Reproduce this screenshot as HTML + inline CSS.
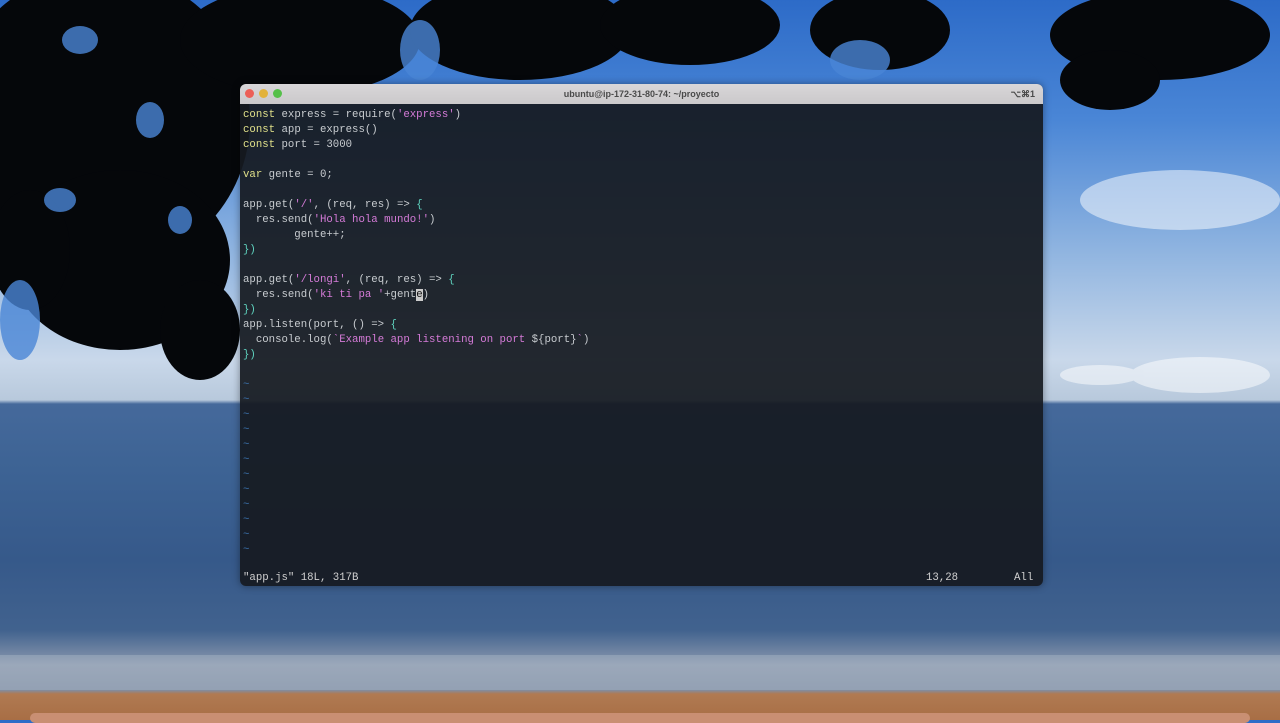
<!DOCTYPE html>
<html><head><meta charset="utf-8"><style>
body{margin:0;width:1280px;height:720px;overflow:hidden;position:relative;font-family:"Liberation Sans",sans-serif;
background:linear-gradient(180deg,#2d6bc8 0px,#4a86d6 120px,#8fb4e0 250px,#c9d8ea 360px,#b8c9dc 400px,#45699b 404px,#3d6394 470px,#36598a 560px,#41628e 630px,#8a98ae 665px,#7f8ea4 690px,#b07a52 694px,#a86e45 720px);}
svg.bg{position:absolute;left:0;top:0}
.term{position:absolute;left:240px;top:84px;width:803px;height:502px;border-radius:6px;overflow:hidden;background:rgba(22,26,32,0.93);box-shadow:0 0 8px rgba(0,0,0,.4)}
.tb{height:20px;background:linear-gradient(#d8d6d8,#cbc9cb);position:relative;font-size:9px;color:#4a4a4a;text-align:center;line-height:20px;font-weight:bold}
.dot{position:absolute;top:5px;width:9px;height:9px;border-radius:50%}
.code{position:absolute;left:3px;top:24px;font-family:"Liberation Mono",monospace;font-size:10.7px;line-height:15px;color:#c8ccd0;white-space:pre}
.k{color:#e0e08a}.s{color:#d57bd8}.g{color:#5fd3bf}.t{color:#3a6fa8}
.st{position:absolute;bottom:2px;font-family:"Liberation Mono",monospace;font-size:10.7px;color:#d0d0d0;white-space:pre}
.dock{position:absolute;left:30px;top:713px;width:1220px;height:10px;background:#c98f73;border-radius:5px}
</style></head><body>
<svg class="bg" width="1280" height="720">
<g fill="#05070a">
<ellipse cx="100" cy="120" rx="150" ry="150"/>
<ellipse cx="120" cy="260" rx="110" ry="90"/>
<ellipse cx="200" cy="330" rx="40" ry="50"/>
<ellipse cx="30" cy="250" rx="40" ry="60"/>
<ellipse cx="300" cy="40" rx="120" ry="55"/>
<ellipse cx="520" cy="30" rx="110" ry="50"/>
<ellipse cx="690" cy="25" rx="90" ry="40"/>
<ellipse cx="880" cy="30" rx="70" ry="40"/>
<ellipse cx="1160" cy="35" rx="110" ry="45"/>
<ellipse cx="1110" cy="80" rx="50" ry="30"/>
</g>
<g fill="#4a86d6" opacity=".8">
<ellipse cx="80" cy="40" rx="18" ry="14"/><ellipse cx="150" cy="120" rx="14" ry="18"/><ellipse cx="60" cy="200" rx="16" ry="12"/><ellipse cx="20" cy="320" rx="20" ry="40"/><ellipse cx="180" cy="220" rx="12" ry="14"/>
<ellipse cx="420" cy="50" rx="20" ry="30"/><ellipse cx="860" cy="60" rx="30" ry="20"/>
</g>
<g fill="#fff" opacity=".5"><ellipse cx="1200" cy="375" rx="70" ry="18"/><ellipse cx="1100" cy="375" rx="40" ry="10"/><ellipse cx="1180" cy="200" rx="100" ry="30"/></g>
<rect x="0" y="655" width="1280" height="35" fill="#c5ccd8" opacity=".3"/>
</svg>
<div class="term">
<div class="tb"><span class="dot" style="left:5px;background:#ec5f57"></span><span class="dot" style="left:19px;background:#e2b23b"></span><span class="dot" style="left:33px;background:#56c04a"></span>ubuntu@ip-172-31-80-74: ~/proyecto<span style="position:absolute;right:8px;top:0">⌥⌘1</span></div>
<div class="code"><span class="k">const</span> express = require(<span class="s">'express'</span>)
<span class="k">const</span> app = express()
<span class="k">const</span> port = 3000

<span class="k">var</span> gente = 0;

app.get(<span class="s">'/'</span>, (req, res) =&gt; <span class="g">{</span>
  res.send(<span class="s">'Hola hola mundo!'</span>)
        gente++;
<span class="g">})</span>

app.get(<span class="s">'/longi'</span>, (req, res) =&gt; <span class="g">{</span>
  res.send(<span class="s">'ki ti pa '</span>+gent<span style="background:#ccc;color:#111">e</span>)
<span class="g">})</span>
app.listen(port, () =&gt; <span class="g">{</span>
  console.log(<span class="s">`Example app listening on port </span>${port}<span class="s">`</span>)
<span class="g">})</span>

<span class="t">~
~
~
~
~
~
~
~
~
~
~
~</span></div>
<div class="st" style="left:3px">"app.js" 18L, 317B</div>
<div class="st" style="left:686px">13,28</div>
<div class="st" style="left:774px">All</div>
</div>
<div class="dock"></div>
</body></html>
